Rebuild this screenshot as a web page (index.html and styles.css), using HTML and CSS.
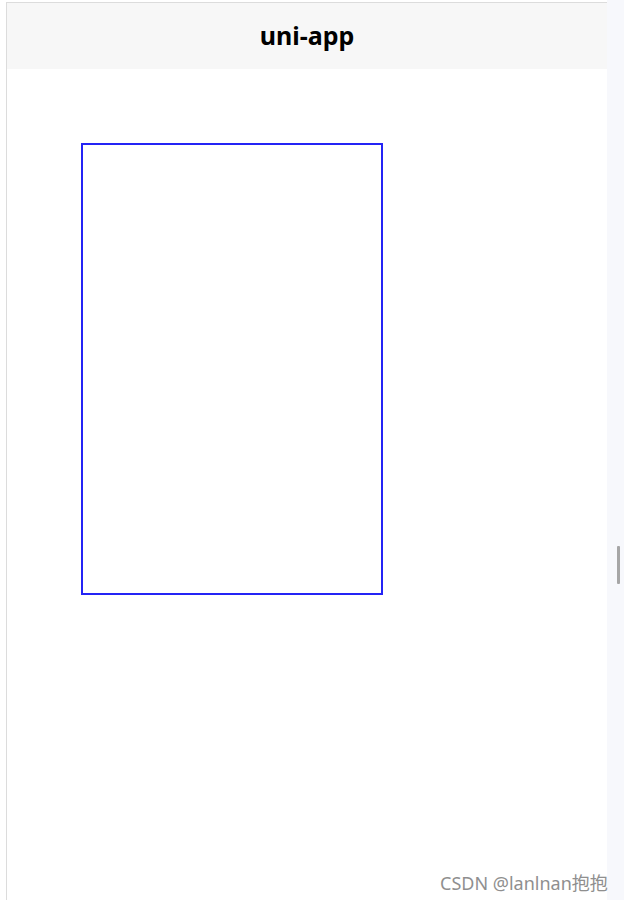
FILE: index.html
```html
<!DOCTYPE html>
<html>
<head>
<meta charset="utf-8">
<link rel="stylesheet" href="styles.css">
</head>
<body>
<div class="page">
  <div class="frame">
    <header class="navbar"><span class="title">uni-app</span></header>
    <main class="content">
      <div class="box"></div>
    </main>
  </div>
  <aside class="track"><div class="thumb"></div></aside>
</div>
<div class="watermark">CSDN @lanlnan抱抱</div>
</body>
</html>
```
FILE: styles.css
```css
html, body {
  margin: 0;
  padding: 0;
  height: 100%;
  background: #ffffff;
  overflow: hidden;
}
.page {
  display: flex;
  height: 900px;
}
.frame {
  margin-left: 6px;
  margin-top: 2px;
  width: 600px;
  border-left: 1px solid #dcdcdc;
  border-top: 1px solid #dcdcdc;
  display: flex;
  flex-direction: column;
}
.navbar {
  height: 66px;
  background: #f7f7f7;
  display: flex;
  align-items: center;
  justify-content: center;
}
.title {
  font-family: "Noto Sans", "Open Sans", sans-serif;
  font-weight: 700;
  font-size: 25px;
  color: #000;
  padding-bottom: 2px;
}
.content {
  flex: 1;
  padding: 74px 0 0 74px;
}
.box {
  width: 298px;
  height: 448px;
  border: 2px solid #2424f5;
}
.track {
  flex: 1;
  background: #f7f8fc;
  padding-top: 546px;
  display: flex;
  justify-content: flex-end;
  padding-right: 4px;
}
.thumb {
  width: 3px;
  height: 38px;
  background: #a6a6a6;
  border-radius: 1px;
}
.watermark {
  position: absolute;
  left: 440px;
  top: 869px;
  font-family: "Noto Sans", "Noto Sans CJK SC", sans-serif;
  font-size: 18px;
  color: #8f8f8f;
  white-space: nowrap;
}
```
